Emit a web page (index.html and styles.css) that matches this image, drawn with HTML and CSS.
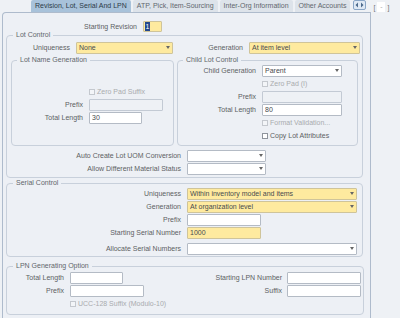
FILE: index.html
```html
<!DOCTYPE html>
<html lang="en">
<head>
  <meta charset="UTF-8" />
  <title>Organization Items - Inventory</title>
  <link rel="stylesheet" href="styles.css">
</head>
<body>
  <div class="tabs">
    <div class="tab active">Revision, Lot, Serial And LPN</div>
    <div class="tab">ATP, Pick, Item-Sourcing</div>
    <div class="tab">Inter-Org Information</div>
    <div class="tab">Other Accounts</div>
    <div class="tab-nav">
      <svg width="9" height="6" viewBox="0 0 9 6"><path d="M3 0.5 L0.5 3 L3 5.5 Z M6 0.5 L8.5 3 L6 5.5 Z" fill="#4d6a8c"/></svg>
    </div>
    <div class="ctl">[<span class="ctl-box">-</span>]</div>
  </div>

  <div class="panel">
    <div class="row rev">
      <span class="lbl w-rev">Starting Revision</span>
      <div class="fld req w-19"><span class="hl">1</span></div>
    </div>

    <fieldset class="grp lot">
      <legend>Lot Control</legend>
      <div class="row">
        <span class="lbl w-65">Uniqueness</span>
        <div class="fld req dd w-97">None</div>
        <span class="lbl w-76">Generation</span>
        <div class="fld req dd w-111">At item level</div>
      </div>

      <div class="subs">
        <fieldset class="grp sub lng">
          <legend>Lot Name Generation</legend>
          <div class="row">
            <span class="lbl w-77"></span>
            <span class="chk off"><span class="cb"></span>Zero Pad Suffix</span>
          </div>
          <div class="row">
            <span class="lbl w-77">Prefix</span>
            <input class="fld off w-74" value="" disabled>
          </div>
          <div class="row">
            <span class="lbl w-77">Total Length</span>
            <input class="fld w-53" value="30">
          </div>
        </fieldset>

        <fieldset class="grp sub clc">
          <legend>Child Lot Control</legend>
          <div class="row">
            <span class="lbl w-84">Child Generation</span>
            <div class="fld dd w-80">Parent</div>
          </div>
          <div class="row">
            <span class="lbl w-84"></span>
            <span class="chk off"><span class="cb"></span>Zero Pad (I)</span>
          </div>
          <div class="row">
            <span class="lbl w-84">Prefix</span>
            <input class="fld off w-80" value="" disabled>
          </div>
          <div class="row">
            <span class="lbl w-84">Total Length</span>
            <input class="fld w-80" value="80">
          </div>
          <div class="row">
            <span class="lbl w-84"></span>
            <span class="chk off"><span class="cb"></span>Format Validation...</span>
          </div>
          <div class="row">
            <span class="lbl w-84"></span>
            <span class="chk"><span class="cb"></span>Copy Lot Attributes</span>
          </div>
        </fieldset>
      </div>

      <div class="row gap-top">
        <span class="lbl w-176">Auto Create Lot UOM Conversion</span>
        <div class="fld dd w-79"></div>
      </div>
      <div class="row">
        <span class="lbl w-176">Allow Different Material Status</span>
        <div class="fld dd w-79"></div>
      </div>
    </fieldset>

    <fieldset class="grp serial">
      <legend>Serial Control</legend>
      <div class="row">
        <span class="lbl w-176">Uniqueness</span>
        <div class="fld req dd w-170">Within inventory model and items</div>
      </div>
      <div class="row">
        <span class="lbl w-176">Generation</span>
        <div class="fld req dd w-170">At organization level</div>
      </div>
      <div class="row">
        <span class="lbl w-176">Prefix</span>
        <input class="fld w-74" value="">
      </div>
      <div class="row">
        <span class="lbl w-176">Starting Serial Number</span>
        <input class="fld req w-74" value="1000">
      </div>
      <div class="row gap-top">
        <span class="lbl w-176">Allocate Serial Numbers</span>
        <div class="fld dd w-170"></div>
      </div>
    </fieldset>

    <fieldset class="grp lpn">
      <legend>LPN Generating Option</legend>
      <div class="row">
        <span class="lbl w-59">Total Length</span>
        <input class="fld w-53" value="">
        <span class="lbl grow">Starting LPN Number</span>
        <input class="fld w-74" value="">
      </div>
      <div class="row">
        <span class="lbl w-59">Prefix</span>
        <input class="fld w-74" value="">
        <span class="lbl grow">Suffix</span>
        <input class="fld w-74" value="">
      </div>
      <div class="row">
        <span class="lbl w-59"></span>
        <span class="chk off"><span class="cb"></span>UCC-128 Suffix (Modulo-10)</span>
      </div>
    </fieldset>
  </div>
</body>
</html>
```

FILE: styles.css
```css
* {
  box-sizing: border-box;
}
body {
  margin: 0;
  width: 400px;
  height: 318px;
  overflow: hidden;
  background: #eef1f5;
  color: #5c5f63;
  font-family: 'Liberation Sans', Arial, sans-serif;
  font-size: 7px;
}
.tabs {
  display: flex;
  align-items: flex-start;
  height: 12px;
  padding-left: 31px;
}
.tab {
  height: 12px;
  line-height: 12px;
  padding: 0 4px;
  margin-right: 2px;
  background: #dde3ea;
  color: #62676e;
  border-radius: 2px 2px 0 0;
  white-space: nowrap;
}
.tab.active {
  background: #a8c2da;
  color: #2c3a48;
}
.tab-nav {
  display: flex;
  align-items: center;
  justify-content: center;
  width: 13px;
  height: 10px;
  margin-left: 1px;
  border: 1px solid #8aa6c6;
  border-radius: 2px;
  background: #dfe9f4;
}
.ctl {
  display: flex;
  align-items: center;
  gap: 2px;
  margin: 2px 0 0 7px;
  color: #777;
}
.ctl-box {
  width: 8px;
  height: 10px;
  background: #fff;
  text-align: center;
  line-height: 10px;
  color: #aaa;
}
.panel {
  margin-left: 2px;
  width: 369px;
  height: 306px;
  padding: 7px 0 0 3px;
  border: 1px solid #aebbcc;
  border-bottom: none;
  border-top-left-radius: 4px;
  background: #edf0f5;
}
.row {
  display: flex;
  align-items: center;
  height: 13px;
}
.row.rev {
  height: 12px;
}
.lbl {
  flex: none;
  padding-right: 6px;
  text-align: right;
  white-space: nowrap;
}
.lbl.grow {
  flex: 1;
  padding-right: 5px;
}
.fld {
  flex: none;
  display: flex;
  align-items: center;
  height: 12px;
  margin: 0;
  padding: 0 2px;
  border: 1px solid #b4bbc5;
  border-radius: 1px;
  background: #fff;
  color: #474a4e;
  font: inherit;
  outline: none;
  white-space: nowrap;
  overflow: hidden;
}
.fld.req {
  background: #feea9f;
  border-color: #cfc49a;
}
.fld.off {
  background: #eef1f5;
  border-color: #c3cad4;
}
.fld.dd {
  justify-content: space-between;
}
.fld.dd::after {
  content: '';
  flex: none;
  margin-left: auto;
  border-top: 3px solid #666;
  border-left: 2px solid transparent;
  border-right: 2px solid transparent;
}
.rev .fld {
  height: 11px;
  padding-left: 1px;
}
.hl {
  display: inline-block;
  width: 5px;
  height: 9px;
  line-height: 9px;
  text-align: center;
  background: #24488c;
  color: #fff;
}
.chk {
  display: flex;
  align-items: center;
  gap: 2px;
  white-space: nowrap;
}
.chk.off {
  color: #a9abae;
}
.cb {
  width: 6px;
  height: 6px;
  border: 1px solid #8e949c;
  background: #fff;
}
.chk.off .cb {
  border-color: #c4c8ce;
  background: #f3f5f8;
}

/* group frames */
.grp {
  margin: 0;
  min-width: 0;
  border: 1px solid #c8d0db;
  border-radius: 4px;
}
.grp legend {
  padding: 0 3px;
  line-height: 8px;
  color: #62666b;
}
.lot {
  width: 357px;
  margin-top: -1px;
  padding: 2px 2px 2px 4px;
}
.lot > legend,
.serial > legend,
.lpn > legend {
  margin-left: 2px;
}
.subs {
  display: flex;
  gap: 3px;
  margin-top: 2px;
}
.sub {
  padding: 0 0 3px 0;
}
.sub legend {
  margin-left: 5px;
}
.lng {
  width: 163px;
  padding-top: 21px;
}
.clc {
  width: 181px;
}
.gap-top {
  margin-top: 3px;
}
.serial {
  width: 357px;
  margin-top: 1px;
  padding: 0 2px 1px 4px;
}
.lpn {
  width: 358px;
  margin-top: 5px;
  padding: 1px 2px 4px 4px;
}

/* widths */
.w-rev { width: 137px; }
.w-19 { width: 19px; }
.w-53 { width: 53px; }
.w-59 { width: 59px; }
.w-65 { width: 65px; }
.w-74 { width: 74px; }
.w-76 { width: 76px; }
.w-77 { width: 77px; }
.w-79 { width: 79px; }
.w-80 { width: 80px; }
.w-84 { width: 84px; }
.w-97 { width: 97px; }
.w-111 { width: 111px; }
.w-170 { width: 170px; }
.w-176 { width: 176px; }
```
